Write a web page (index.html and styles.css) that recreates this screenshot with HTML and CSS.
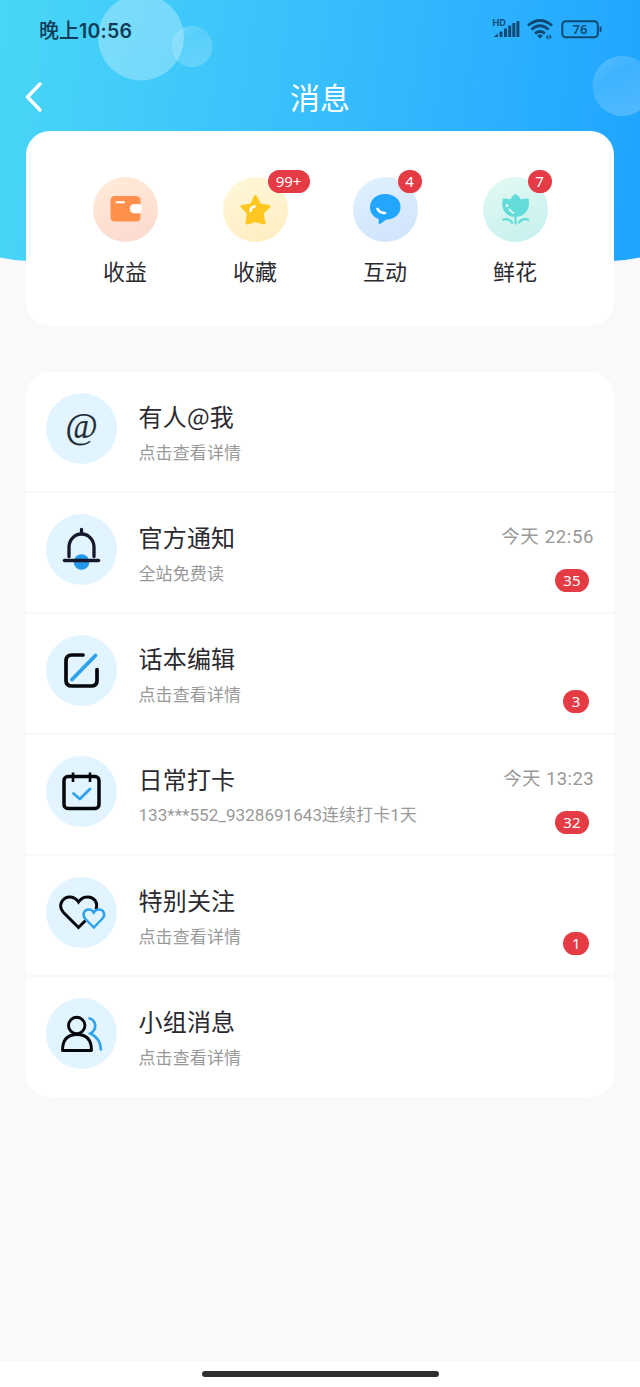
FILE: index.html
```html
<!DOCTYPE html>
<html lang="zh-CN">
<head>
<meta charset="utf-8">
<title>消息</title>
<link rel="stylesheet" href="styles.css">
</head>
<body>
<div class="screen">
  <svg class="hero" width="640" height="264" viewBox="0 0 640 264">
    <defs>
      <linearGradient id="sky" gradientUnits="userSpaceOnUse" x1="0" y1="90" x2="625" y2="175">
        <stop offset="0" stop-color="#48d6f6"/><stop offset=".5" stop-color="#37befd"/><stop offset="1" stop-color="#21a6ff"/>
      </linearGradient>
      <linearGradient id="bubble" x1="0.2" y1="0" x2="0.8" y2="1">
        <stop offset="0" stop-color="#fff" stop-opacity=".3"/><stop offset="1" stop-color="#fff" stop-opacity=".28"/>
      </linearGradient>
      <linearGradient id="bubble2" x1="0.2" y1="0" x2="0.8" y2="1">
        <stop offset="0" stop-color="#fff" stop-opacity=".22"/><stop offset=".3" stop-color="#fff" stop-opacity=".13"/><stop offset="1" stop-color="#fff" stop-opacity=".22"/>
      </linearGradient>
    </defs>
    <path d="M0 0H640V257.500Q626 260.500 612 261H28Q14 260.500 0 257.500Z" fill="url(#sky)"/>
    <circle cx="192" cy="46.500" r="20.500" fill="url(#bubble2)"/>
    <circle cx="141" cy="37.500" r="43" fill="url(#bubble)"/>
    <circle cx="622.500" cy="86" r="30" fill="url(#bubble2)"/>
  </svg>

  <header class="status">
    <span class="clock">晚上<span class="digits">10:56</span></span>
    <svg class="status-icons" width="112" height="26" viewBox="0 0 112 26" fill="#104a73">
      <text x="1.500" y="9" class="hd">HD</text>
      <path d="M2.500 20l4.500-3.500V20zM8.500 14.500h3V20h-3zM13 11.500h3V20h-3zM17.200 8.500h3V20h-3zM21.300 6h3v14h-3zM25.400 4h3v16h-3z"/>
      <g fill="none" stroke="#104a73" stroke-width="2.700">
        <path d="M37 8.500Q49 -1.500 61 8.500M40.500 12.500Q49 5 57.500 12.500M44 16.500Q49 12.500 54 16.500"/>
      </g>
      <path d="M46 18.500Q49 16.500 52 18.500L49 21.500zM55 20l2.200-2.500v5.500zM58.500 17v5.500l2.200-2.500z"/>
      <rect x="71.300" y="4.300" width="35.500" height="16" rx="3.500" fill="none" stroke="#104a73" stroke-width="2"/>
      <rect x="108.500" y="9.500" width="2" height="5.500" rx="1"/>
      <text x="89" y="17" text-anchor="middle" class="battery">76</text>
    </svg>
  </header>

  <nav class="titlebar">
    <svg class="back" width="20" height="32" viewBox="0 0 20 32"><path d="M16 3L3.500 16l12.500 13" fill="none" stroke="#fff" stroke-width="3.400" stroke-linecap="round" stroke-linejoin="round"/></svg>
    <h1>消息</h1>
  </nav>

  <section class="shortcuts">
    <div class="shortcut">
      <div class="disc orange">
        <svg width="65" height="65" viewBox="0 0 65 65"><path d="M22 19H43Q47.500 19 47.500 23.500V27H41.500a4.700 4.700 0 0 0 0 9.500H47.500V40Q47.500 44.500 43 44.500H22Q17.500 44.500 17.500 40V23.500Q17.500 19 22 19Z" fill="#ff914c"/><rect x="37" y="27.500" width="12" height="8.500" rx="4" fill="#fff"/><path d="M23.500 25.200h7.500" stroke="#fff" stroke-width="2" stroke-linecap="round"/></svg>
      </div>
      <span>收益</span>
    </div>
    <div class="shortcut">
      <div class="disc yellow">
        <svg width="65" height="65" viewBox="0 0 65 65"><path d="M32.500 19.500L36.500 28L46 29.500L39 36L41 46L32.500 43.500L24 46L25.500 36L19 29.500L28.500 28Z" fill="#ffc71f" stroke="#ffc71f" stroke-width="3" stroke-linejoin="round"/><path d="M27.500 34Q27.500 30.500 31.500 29.500" fill="none" stroke="#fff" stroke-width="2.500" stroke-linecap="round"/></svg>
        <b class="badge wide">99+</b>
      </div>
      <span>收藏</span>
    </div>
    <div class="shortcut">
      <div class="disc blue">
        <svg width="65" height="65" viewBox="0 0 65 65"><path d="M32 17C41 17 47.500 22.500 47.500 30C47.500 38 41 42 33.500 42.500C31.500 43.500 29 46 27 47Q25.500 47.500 25.700 45.500V42C20.500 40 17 36 17 30.500C17 22.500 23.500 17 32 17Z" fill="#22a6ff"/><path d="M24.500 31.800C26 34.500 28.500 36 32 36" fill="none" stroke="#fff" stroke-width="2.600" stroke-linecap="round"/></svg>
        <b class="badge">4</b>
      </div>
      <span>互动</span>
    </div>
    <div class="shortcut">
      <div class="disc green">
        <svg width="65" height="65" viewBox="0 0 65 65"><path d="M20 21.500Q24 21 27 22.500Q29 18.500 32.500 17Q36 18.500 38 22.500Q41 21 45.500 21.500C47.500 31 43.500 39.500 32.500 40C21.500 39.500 17.500 31 20 21.500Z" fill="#62dbd9"/><path d="M32.500 39v7.500M20.500 42.500Q26 41 29 45.500M45 42.500Q39 41 36 45.500" fill="none" stroke="#62dbd9" stroke-width="2.300" stroke-linecap="round"/><path d="M26.500 32.500Q28.500 35 30.500 36" fill="none" stroke="#dffcf8" stroke-width="2" stroke-linecap="round"/><circle cx="24" cy="28.500" r="1.500" fill="#dffcf8"/></svg>
        <b class="badge">7</b>
      </div>
      <span>鲜花</span>
    </div>
  </section>

  <main class="list">
    <article class="row">
      <div class="avatar at">@</div>
      <div class="body"><h2>有人@我</h2><p>点击查看详情</p></div>
    </article>
    <article class="row">
      <div class="avatar"><svg width="71" height="71" viewBox="0 0 71 71"><circle cx="35.500" cy="48" r="7.800" fill="#2398ec"/><path d="M23 42.500V33a12.500 13 0 0 1 25 0V42.500M35.500 19.500V15.500" fill="none" stroke="#15172b" stroke-width="3.300" stroke-linecap="round"/><path d="M18.500 46.500h34" stroke="#15172b" stroke-width="3.500" stroke-linecap="round"/></svg></div>
      <div class="body"><h2>官方通知</h2><p>全站免费读</p></div>
      <div class="meta"><time>今天 22:56</time><b class="badge">35</b></div>
    </article>
    <article class="row">
      <div class="avatar"><svg width="71" height="71" viewBox="0 0 71 71" fill="none" stroke-linecap="round"><path d="M37 20H26Q20 20 20 26V45.500Q20 51 26 51H45Q51 51 51 45.500V34.500" stroke="#05070a" stroke-width="3.700"/><path d="M26 44.500L49.500 20.500" stroke="#2ea2ec" stroke-width="3.800"/></svg></div>
      <div class="body"><h2>话本编辑</h2><p>点击查看详情</p></div>
      <div class="meta"><b class="badge single">3</b></div>
    </article>
    <article class="row">
      <div class="avatar"><svg width="71" height="71" viewBox="0 0 71 71" fill="none"><rect x="18" y="20.500" width="35" height="32" rx="4" stroke="#05070a" stroke-width="3.500"/><path d="M27 16.500v9.500M44 16.500v9.500" stroke="#05070a" stroke-width="2.600"/><path d="M27.500 37.500l6.300 5.500L44 33" stroke="#2ea2ec" stroke-width="2.800" stroke-linecap="round" stroke-linejoin="round"/></svg></div>
      <div class="body"><h2>日常打卡</h2><p class="mixed">133***552_9328691643连续打卡1天</p></div>
      <div class="meta"><time class="narrow">今天 13:23</time><b class="badge">32</b></div>
    </article>
    <article class="row">
      <div class="avatar"><svg width="71" height="71" viewBox="0 0 71 71" fill="none"><path d="M39.500 43.500L32.500 50.500L17.500 35.500C11 28 17 19.500 24.500 20Q29.500 20.500 32.500 25Q36 20 41 20C47.500 19.500 52.500 25 50 32.500" stroke="#05070a" stroke-width="3"/><path d="M47.800 50.500L39 41.500C35.500 36.500 39 32.500 42.800 32.500Q46 32.500 47.800 35.500Q49.500 32.500 53 32.500C57.500 32.500 60 37.500 56.500 41.500Z" stroke="#2ea2ec" stroke-width="2.500"/></svg></div>
      <div class="body"><h2>特别关注</h2><p>点击查看详情</p></div>
      <div class="meta"><b class="badge">1</b></div>
    </article>
    <article class="row">
      <div class="avatar"><svg width="71" height="71" viewBox="0 0 71 71" fill="none"><circle cx="30.700" cy="27.500" r="8.200" stroke="#05070a" stroke-width="2.900"/><path d="M16.500 52.500Q16.500 36.500 31 36.500Q45.500 36.500 45.500 52.500Z" stroke="#05070a" stroke-width="2.900" stroke-linejoin="round"/><path d="M42.500 20C50.500 22 51.500 31.500 44.500 35.500C51 38.500 55 44.500 55 52.500" stroke="#2ea2ec" stroke-width="2.600"/></svg></div>
      <div class="body"><h2>小组消息</h2><p>点击查看详情</p></div>
    </article>
  </main>

  <footer class="home"><i></i></footer>
</div>
</body>
</html>
```
FILE: styles.css
```css
* { box-sizing: border-box; margin: 0; padding: 0; }

body {
  background: #faf8f9;
  font-family: "Noto Sans CJK SC", sans-serif;
  color: #2a2a30;
}

.screen {
  position: relative;
  display: flex;
  flex-direction: column;
  width: 640px;
  height: 1387px;
  overflow: hidden;
}

.hero { position: absolute; top: 0; left: 0; z-index: -1; }

.status {
  display: flex;
  justify-content: space-between;
  align-items: center;
  height: 60px;
  padding: 0 37px 0 39px;
}

.clock {
  font: 500 20px/28px "Noto Sans CJK SC", sans-serif;
  color: #0e3d59;
}

.digits { font: 600 19.5px/28px Inter, sans-serif; letter-spacing: 0.2px; }
.hd { font: 700 9px Inter, sans-serif; }
.battery { font: 600 13px "Noto Sans", sans-serif; }

.titlebar {
  display: grid;
  grid-template-columns: 40px 1fr 40px;
  align-items: center;
  height: 71px;
  padding: 2px 24px 0;
}

.titlebar h1 {
  margin-top: -2px;
  text-align: center;
  font-size: 30px;
  line-height: 40px;
  font-weight: 400;
  color: #fff;
}

.shortcuts {
  display: grid;
  grid-template-columns: repeat(4, 130px);
  justify-content: center;
  height: 195px;
  margin: 0 26px;
  padding-top: 46px;
  background: #fff;
  border-radius: 24px;
}

.shortcut {
  display: flex;
  flex-direction: column;
  align-items: center;
  gap: 12px;
  font-size: 22px;
  line-height: 32px;
}

.disc {
  position: relative;
  width: 65px;
  height: 65px;
  border-radius: 50%;
}

.disc svg { display: block; }
.orange { background: linear-gradient(160deg, #ffecd8, #fcd8cf); }
.yellow { background: linear-gradient(160deg, #fff8dc, #ffedbe); }
.blue { background: linear-gradient(160deg, #e0f1ff, #cfe3fb); }
.green { background: linear-gradient(160deg, #e3faf3, #c5efee); }

.badge {
  display: block;
  min-width: 24px;
  height: 23px;
  padding: 0 8.5px;
  border-radius: 12px;
  background: #e43b45;
  color: #fff;
  text-align: center;
  font: 400 15px/23px "Noto Sans", "Noto Sans CJK SC", sans-serif;
}

.disc .badge { position: absolute; top: -7px; left: 45px; padding: 0; }
.disc .badge.wide { width: 42px; }

.list {
  margin: 46px 26px 0;
  background: #fff;
  border-radius: 24px;
}

.row {
  display: grid;
  grid-template-columns: 71px 1fr auto;
  column-gap: 21.5px;
  height: 121.1px;
  padding: 20.5px 20px 0 20px;
  border-bottom: 2px solid #f9f9f9;
}

.row:last-child { height: 120px; border-bottom: 0; }

.avatar {
  width: 71px;
  height: 71px;
  border-radius: 50%;
  background: #e1f4ff;
}

.avatar svg { display: block; }

.at {
  text-align: center;
  font: 35px/68px "Liberation Serif", serif;
  color: #1d2c33;
  -webkit-text-stroke: 0.2px #1d2c33;
}

.body { padding-top: 5px; white-space: nowrap; }
.body h2 { font-size: 24px; line-height: 36px; font-weight: 400; letter-spacing: 0.2px; }
.body p { margin-top: 4.5px; font-size: 17px; line-height: 28px; color: #999; letter-spacing: 0.1px; }
.body .mixed { font-family: Roboto, "Noto Sans CJK SC", sans-serif; letter-spacing: 0.05px; }

.meta {
  display: flex;
  flex-direction: column;
  align-items: flex-end;
  justify-content: flex-end;
  height: 78.5px;
}

.meta time {
  margin-bottom: 18px;
  font: 18.5px/28px Roboto, "Noto Sans CJK SC", sans-serif;
  color: #999;
  letter-spacing: 0.65px;
}

.meta .narrow { letter-spacing: 0.4px; }

.meta .badge { margin-right: 5px; }
.meta .single { min-width: 26px; }

.home {
  display: flex;
  justify-content: center;
  align-items: flex-start;
  height: 26px;
  margin-top: auto;
  padding-top: 10px;
  background: #fff;
}

.home i { width: 237px; height: 6px; border-radius: 3px; background: #303030; }
```
